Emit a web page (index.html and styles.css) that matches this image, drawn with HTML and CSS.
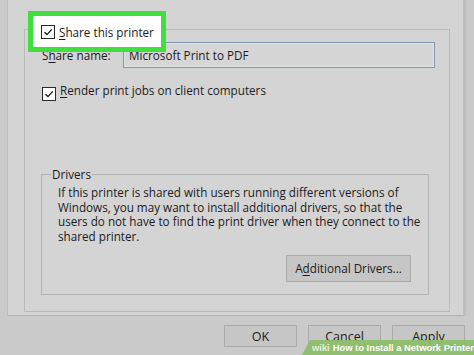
FILE: index.html
```html
<!DOCTYPE html>
<html lang="en">
<head>
    <meta charset="UTF-8">
    <meta name="viewport" content="width=device-width, initial-scale=1.0">
    <title>Sharing</title>
    <link rel="stylesheet" href="styles.css">
</head>
<body>
    <div class="panel">
        <div class="share-group">
            <label class="share-head">
                <span class="check">
                    <svg viewBox="0 0 12 12" width="12" height="12"><polyline points="2.5,6.2 5,8.6 9.8,3.4" /></svg>
                </span>
                <span><u>S</u>hare this printer</span>
            </label>

            <div class="name-row">
                <label for="shareName">S<u>h</u>are name:</label>
                <input type="text" id="shareName" value="Microsoft Print to PDF">
            </div>

            <label class="render-row">
                <span class="check">
                    <svg viewBox="0 0 12 12" width="12" height="12"><polyline points="2.5,6.2 5,8.6 9.8,3.4" /></svg>
                </span>
                <span class="render-text"><u>R</u>ender print jobs on client computers</span>
            </label>

            <fieldset class="drivers">
                <legend>Drivers</legend>
                <p>If this printer is shared with users running different versions of<br>
                Windows, you may want to install additional drivers, so that the<br>
                users do not have to find the print driver when they connect to the<br>
                shared printer.</p>
                <div class="drivers-actions">
                    <button type="button">A<u>d</u>ditional Drivers...</button>
                </div>
            </fieldset>
        </div>
    </div>

    <div class="dialog-buttons">
        <button type="button">OK</button>
        <button type="button">Cancel</button>
        <button type="button">Apply</button>
    </div>

    <div class="wiki-tag"><b class="wiki">wiki</b><b>How</b> to Install a Network Printer</div>
</body>
</html>
```

FILE: styles.css
```css
body {
    font-family: "Open Sans", "Noto Sans", Arial, sans-serif;
    font-size: 11.7px;
    color: #1c1c1c;
    background-color: #cacaca;
    margin: 0;
    padding: 0;
    width: 474px;
    height: 355px;
    overflow: hidden;
    position: relative;
}
u {
    text-decoration-thickness: 1px;
    text-underline-offset: 2px;
}
.panel {
    margin-left: 7px;
    width: 455px;
    height: 286px;
    background-color: #d4d4d4;
    border-left: 1px solid #bdbdbd;
    border-right: 3px solid #bfbfbf;
    border-bottom: 1px solid #b3b3b3;
    padding-top: 29px;
}
.share-group {
    margin-left: 16px;
    width: 424px;
    height: 281px;
    border: 1px solid #bababa;
}
.check {
    width: 12px;
    height: 12px;
    border: 1px solid #2a2a2a;
    background: #fff;
    display: flex;
    flex-shrink: 0;
}
.check svg polyline {
    fill: none;
    stroke: #1a1a1a;
    stroke-width: 1.4;
}
.share-head {
    display: flex;
    align-items: center;
    gap: 4px;
    width: 120px;
    height: 31px;
    margin-top: -14px;
    margin-left: 8px;
    padding-left: 8px;
    background: #fff;
    outline: 5px solid #3fe03d;
    position: relative;
    z-index: 1;
}
.name-row {
    display: flex;
    align-items: center;
    margin-top: -5px;
    padding-left: 17px;
}
.name-row label {
    width: 81px;
}
.name-row input {
    width: 312px;
    height: 26px;
    box-sizing: border-box;
    border: 1px solid #7f99b4;
    box-shadow: inset 0 0 0 1px #d9e4e6;
    background: #d6d6d6;
    padding: 0 5px;
    font-family: inherit;
    font-size: 11.7px;
    color: #1c1c1c;
}
.render-row {
    display: flex;
    align-items: flex-start;
    gap: 4px;
    margin-top: 19px;
    padding-left: 17px;
}
.render-text {
    line-height: 14px;
    margin-top: -4px;
}
.drivers {
    margin: 66px 0 0 16px;
    width: 388px;
    padding: 0 0 12px 0;
    border: 1px solid #b3b3b3;
    box-sizing: border-box;
}
.drivers legend {
    margin-left: 9px;
    padding: 0 1px;
    line-height: 14px;
}
.drivers p {
    margin: 4px 0 0 16px;
    line-height: 14.7px;
    white-space: nowrap;
}
.drivers-actions {
    display: flex;
    justify-content: flex-end;
    padding-right: 17px;
    margin-top: 11px;
}
button {
    font-family: inherit;
    font-size: 11.7px;
    color: #1c1c1c;
    background-color: #c6c6c6;
    border: 1px solid #aaaaaa;
    padding: 0;
}
.drivers-actions button {
    width: 125px;
    height: 27px;
}
.dialog-buttons {
    display: flex;
    justify-content: flex-end;
    gap: 11px;
    padding-right: 9px;
    margin-top: 9px;
}
.dialog-buttons button {
    width: 73px;
    height: 22px;
    font-size: 12.5px;
}
.wiki-tag {
    position: absolute;
    right: 0;
    bottom: 0;
    width: 172px;
    height: 15px;
    box-sizing: border-box;
    padding-left: 10px;
    background: rgba(140, 190, 105, 0.93);
    clip-path: polygon(8px 0, 100% 0, 100% 100%, 0 100%);
    color: #fff;
    font-family: "Liberation Sans", Arial, sans-serif;
    font-size: 9.4px;
    font-weight: bold;
    line-height: 16px;
    white-space: nowrap;
    overflow: hidden;
}
.wiki-tag .wiki {
    color: #e4efd9;
    margin-right: 3px;
}
```
